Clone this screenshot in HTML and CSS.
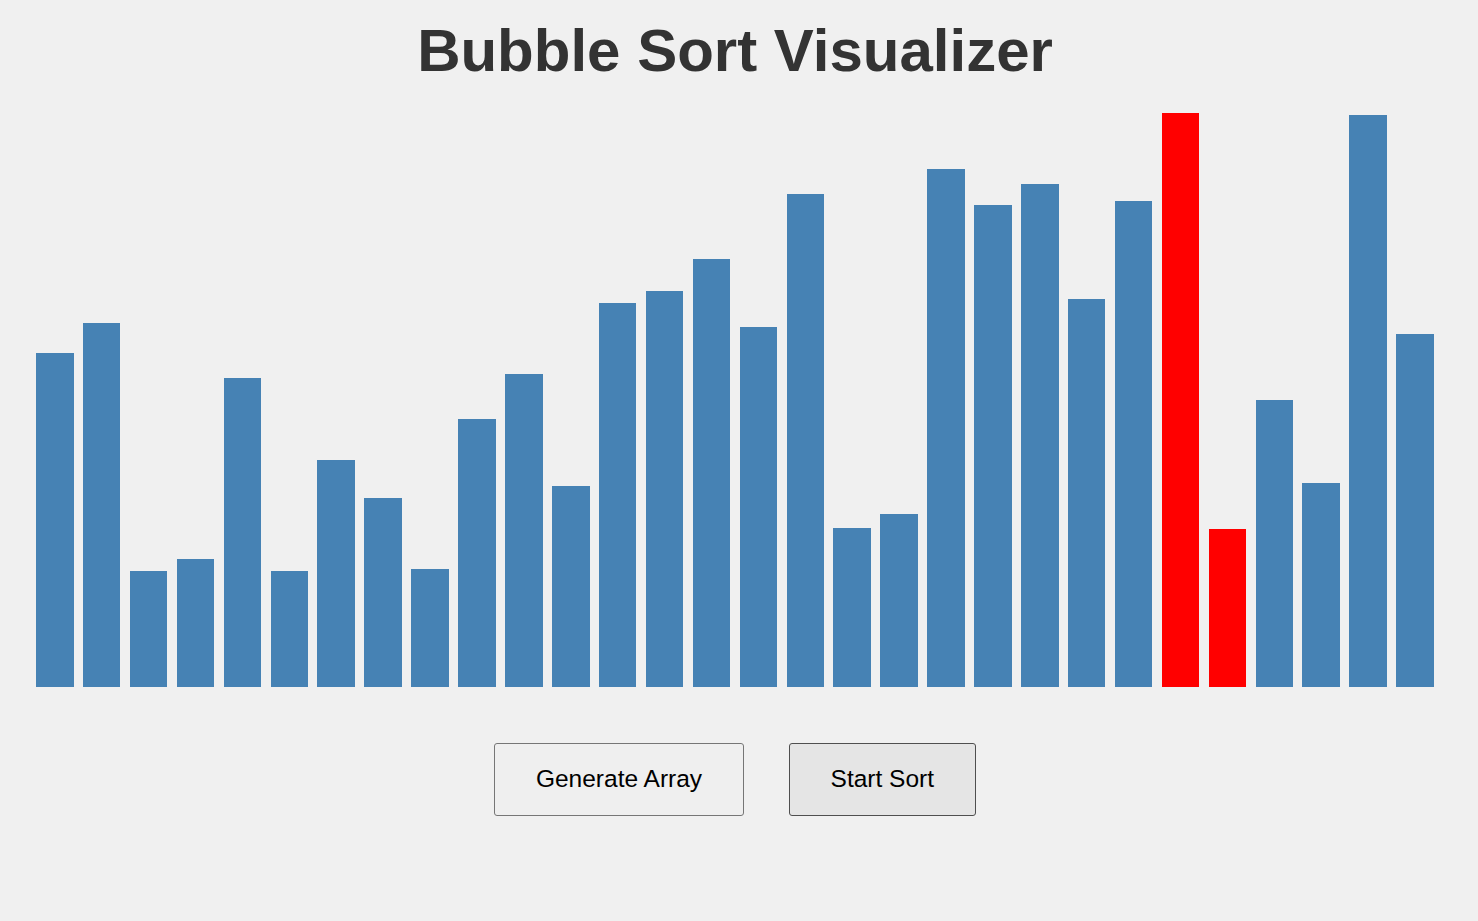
FILE: index.html
```html
<!DOCTYPE html>
<html lang="en">
<head>
<meta charset="utf-8">
<title>Bubble Sort Visualizer</title>
<link rel="stylesheet" href="styles.css">
</head>
<body>
<div class="app">
  <h1 class="title">Bubble Sort Visualizer</h1>
  <div class="bars">
    <div class="bar" style="height:334px"></div>
    <div class="bar" style="height:364px"></div>
    <div class="bar" style="height:116px"></div>
    <div class="bar" style="height:128px"></div>
    <div class="bar" style="height:309px"></div>
    <div class="bar" style="height:116px"></div>
    <div class="bar" style="height:227px"></div>
    <div class="bar" style="height:189px"></div>
    <div class="bar" style="height:118px"></div>
    <div class="bar" style="height:268px"></div>
    <div class="bar" style="height:313px"></div>
    <div class="bar" style="height:201px"></div>
    <div class="bar" style="height:384px"></div>
    <div class="bar" style="height:396px"></div>
    <div class="bar" style="height:428px"></div>
    <div class="bar" style="height:360px"></div>
    <div class="bar" style="height:493px"></div>
    <div class="bar" style="height:159px"></div>
    <div class="bar" style="height:173px"></div>
    <div class="bar" style="height:518px"></div>
    <div class="bar" style="height:482px"></div>
    <div class="bar" style="height:503px"></div>
    <div class="bar" style="height:388px"></div>
    <div class="bar" style="height:486px"></div>
    <div class="bar bar-active" style="height:574px"></div>
    <div class="bar bar-active" style="height:158px"></div>
    <div class="bar" style="height:287px"></div>
    <div class="bar" style="height:204px"></div>
    <div class="bar" style="height:572px"></div>
    <div class="bar" style="height:353px"></div>
  </div>
  <div class="controls">
    <button class="btn">Generate Array</button>
    <button class="btn btn-hover">Start Sort</button>
  </div>
</div>
</body>
</html>
```

FILE: styles.css
```css
html, body {
  margin: 0;
  padding: 0;
  background: #f0f0f0;
}

body {
  font-family: "Liberation Sans", Arial, sans-serif;
  color: #333;
}

.app {
  width: 1470px;
  padding-top: 16px;
  display: flex;
  flex-direction: column;
  align-items: center;
}

.title {
  margin: 0;
  font-size: 60px;
  font-weight: bold;
  color: #333;
  line-height: normal;
}

.bars {
  width: 1398px;
  height: 600px;
  margin-top: 2px;
  display: flex;
  align-items: flex-end;
  gap: 9.36px;
}

.bar {
  flex: 1;
  background: #4682b4;
}

.bar-active {
  background: #ff0000;
}

.controls {
  margin-top: 56px;
  display: flex;
  gap: 45px;
}

.btn {
  font-family: "Liberation Sans", Arial, sans-serif;
  font-size: 24.5px;
  color: #000;
  background: #efefef;
  border: 1px solid #767676;
  border-radius: 3px;
  padding: 21.4px 40.75px;
  line-height: normal;
}

.btn-hover {
  background: #e5e5e5;
  border-color: #4f4f4f;
}
```
